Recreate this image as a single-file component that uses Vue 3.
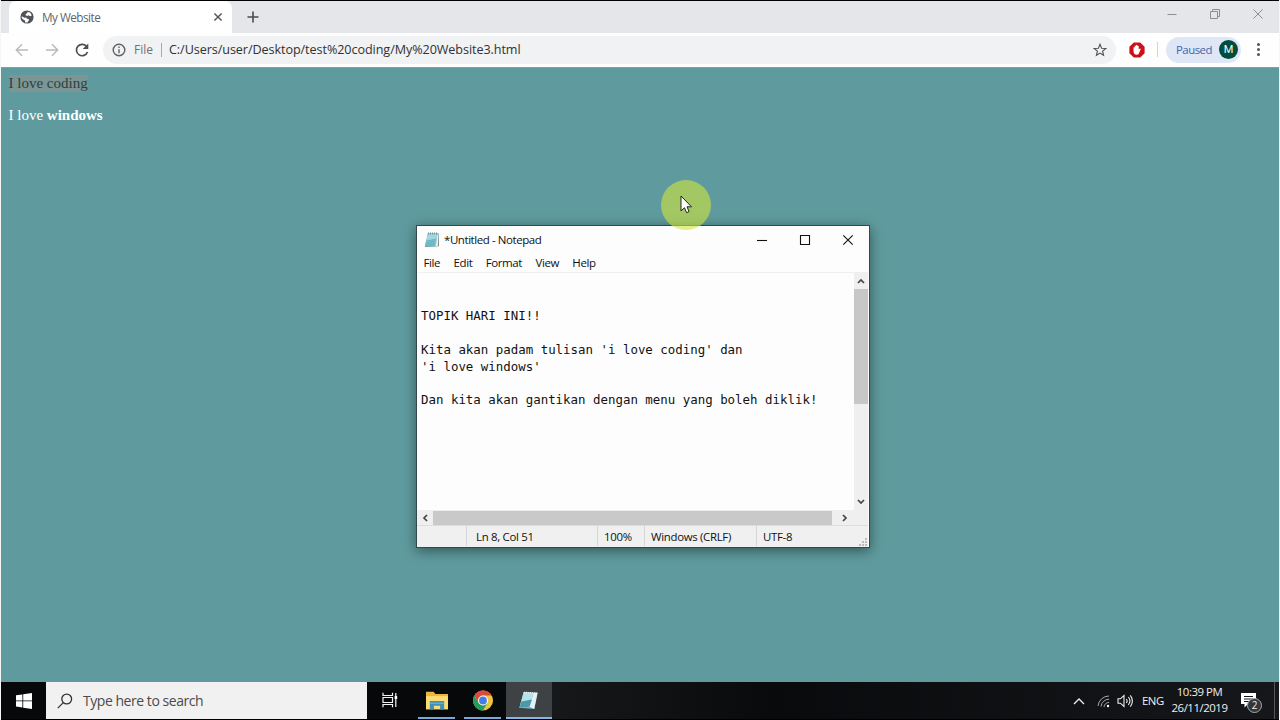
<template>
  <div class="screen">
    <header class="tabstrip">
      <div class="tab">
        <svg class="globe" viewBox="0 0 14 14"><circle cx="7" cy="7" r="6.6" fill="#505358" /><path d="M1.7 6.2l2.7 1.5 1.8-.2.8 1.2 1.7.2.2 1.5-1.6 2-2.2.2-.1-2-1.8-1.1-1.5-1.6zM7.6 1.7l2.8 1.1 1.4 2.8-1.7.7-1.7-1-1.2.6-1.6-.7.2-1.4 1.5-.5z" fill="#fff" /></svg>
        <span class="tab-title">My Website</span>
        <svg class="tab-close" viewBox="0 0 10 10"><path d="M1.4 1.4l7.2 7.2M8.6 1.4L1.4 8.6" /></svg>
      </div>
      <svg class="new-tab" viewBox="0 0 12 12"><path d="M6 .5v11M.5 6h11" /></svg>
      <div class="browser-controls">
        <svg viewBox="0 0 12 12"><path d="M1.5 6.5h9" /></svg>
        <svg viewBox="0 0 12 12"><path d="M1.5 3.5h7v7h-7zM3.5 3.5v-2h7v7h-2" /></svg>
        <svg viewBox="0 0 12 12"><path d="M1.5 1.5l9 9M10.5 1.5l-9 9" /></svg>
      </div>
    </header>

    <div class="toolbar">
      <svg class="nav muted" viewBox="0 0 16 16"><path d="M14 8H2.5M8 2.3L2.3 8 8 13.7" /></svg>
      <svg class="nav muted" viewBox="0 0 16 16"><path d="M2 8h11.5M8 2.3L13.7 8 8 13.7" /></svg>
      <svg class="nav" viewBox="0 0 16 16"><path d="M12.8 4.7A5.7 5.7 0 1 0 13.5 10" /><path d="M14.3 1.5v5.6H8.7z" fill="#4b4e52" stroke="none" /></svg>
      <div class="omnibox">
        <svg class="info" viewBox="0 0 14 14"><circle cx="7" cy="7" r="5.8" /><path d="M7 6.2v4M7 3.5v1.5" /></svg>
        <span class="scheme">File</span>
        <i class="divider"></i>
        <span class="url">C:/Users/user/Desktop/test%20coding/My%20Website3.html</span>
        <svg class="star" viewBox="0 0 14 14"><path d="M7 1.3l1.6 3.9 4.2.3-3.2 2.7 1 4.1L7 10.1l-3.6 2.2 1-4.1-3.2-2.7 4.2-.3z" /></svg>
      </div>
      <svg class="adblock" viewBox="0 0 16 16"><path d="M4.8.4h6.4l4.4 4.4v6.4l-4.4 4.4H4.8L.4 11.2V4.8z" fill="#ca1018" /><path d="M4.5 8.2V5.5q.8-.7 1.2 0V4q.7-.8 1.3 0v-.7q.8-.9 1.4 0V4q.8-.7 1.3 0v3.5l1.1-1q.9-.1.9.7l-1.8 4.2q-.6 1.3-2.2 1.3-2.6 0-3-2z" fill="#fff" /></svg>
      <i class="tool-divider"></i>
      <div class="profile"><span>Paused</span><b>M</b></div>
      <i class="more"></i>
    </div>

    <main class="page">
      <p><span class="selected">I love coding</span></p>
      <p>I love <b>windows</b></p>
    </main>

    <footer class="taskbar">
      <div class="start"><svg viewBox="0 0 16 16"><path d="M0 2.3L6.4 1.4v6.1H0zM7.2 1.3L16 0v7.5H7.2zM0 8.3h6.4v6.2L0 13.6zM7.2 8.3H16V16l-8.8-1.3z" fill="#fff" /></svg></div>
      <div class="search">
        <svg viewBox="0 0 16 16"><circle cx="9.7" cy="6" r="4.9" /><path d="M6.3 9.6L.8 15.1" /></svg>
        <span>Type here to search</span>
      </div>
      <div class="task taskview"><svg viewBox="0 0 16 16"><path d="M1 .8v2.7h9.5V.8M1 15.2v-2.7h9.5v2.7M1 5.5h9.5v5H1zM13.8 1v14" /><path d="M12.6 4h2.6v3h-2.6z" fill="#fff" stroke="none" /></svg></div>
      <div class="task open"><svg class="big" viewBox="0 0 20 18"><path d="M0 1h7l1.5 2H20v14H0z" fill="#eab63f" /><path d="M0 5h20v12H0z" fill="#fbdc72" /><path d="M3.5 17V9.5h13V17h-3.7v-3.2H7.2V17z" fill="#4190b8" /><path d="M3.5 11.5h13" stroke="#68b4d5" stroke-width="1" /></svg></div>
      <div class="task open">
        <svg class="big" viewBox="0 0 22 22"><circle cx="11" cy="11" r="10.5" fill="#efc342" /><path d="M1.9 5.8A10.5 10.5 0 0 1 20.1 5.8H11L6.5 13.6z" fill="#db4a3c" /><path d="M1.9 5.8A10.5 10.5 0 0 0 11 21.5l4.5-7.9-4.5 2.6-4.5-2.6z" fill="#249d59" /><circle cx="11" cy="11" r="5.2" fill="#fff" /><circle cx="11" cy="11" r="4.1" fill="#427de8" /></svg>
      </div>
      <div class="task open active">
        <svg class="big" viewBox="0 0 22 22"><path d="M5.4 2L20 3l-3.5 17L1 18.5z" fill="#70b7c6" /><path d="M5.4 2L16 3l-4.5 14.5L1 18.5z" fill="#b7e1e8" /><path d="M16 3l4 0-3.5 17-5-2.5z" fill="#e6f1f2" /><path d="M3 12l11-2-2.5 7.5L1 18.5z" fill="#4899aa" /><path d="M6 2.5l13 .8" stroke="#eef8f8" stroke-width="1.5" stroke-dasharray="1 1" /></svg>
      </div>
      <div class="tray">
        <svg class="chevron" viewBox="0 0 12 8"><path d="M1 7l5-5 5 5" /></svg>
        <svg class="wifi" viewBox="0 0 14 14"><g fill="none" stroke="#a5a6a9"><path d="M1 12A11 11 0 0 1 12 2M4 12.5A8 8 0 0 1 12.2 5.2M7 13a5 5 0 0 1 5.2-4.6" /></g><circle cx="11" cy="12" r="1.2" fill="#fff" stroke="none" /></svg>
        <svg class="volume" viewBox="0 0 16 14"><path d="M1 4.8h2.4L7 1.5v11L3.4 9.2H1zM9.3 5q1.7 2 0 4M11.3 3q3.3 4 0 8M13.3 1.3q4.2 5.7 0 11.4" /></svg>
        <span class="lang">ENG</span>
        <div class="clock"><span>10:39 PM</span><span>26/11/2019</span></div>
        <div class="notices"><svg viewBox="0 0 16 16"><path d="M0 0h15v11H7l-3.5 3.5V11H0z" fill="#fff" /><path d="M3 3.5h9M3 6h9M3 8.5h6" stroke="#111318" /></svg><b>2</b></div>
        <i class="show-desktop"></i>
      </div>
    </footer>

    <section class="notepad">
      <div class="titlebar">
        <svg class="note-icon" viewBox="0 0 16 16"><path d="M3.8 1.5h11v12.8L1 15z" fill="#64777c" /><path d="M3.8 1.5h9.7l-1.8 12.7H1z" fill="#a1d7df" /><path d="M2.2 8.5l9.9-2-1.1 7.7H1z" fill="#71b9c7" /><path d="M13.5 2l1 .3-.7 11.6-2.1.3z" fill="#edf4f4" /><path d="M4 1.5h10" stroke="#6f969d" stroke-width="2" stroke-dasharray="1 1" /></svg>
        <span class="window-title">*Untitled - Notepad</span>
        <div class="window-controls">
          <svg viewBox="0 0 12 12"><path d="M1 6.5h10" /></svg>
          <svg viewBox="0 0 12 12"><path d="M1.5 1.5h9v9h-9z" /></svg>
          <svg viewBox="0 0 12 12"><path d="M1.3 1.3l9.4 9.4M10.7 1.3l-9.4 9.4" /></svg>
        </div>
      </div>
      <nav class="menu"><span v-for="item in menus" :key="item">{{ item }}</span></nav>
      <div class="editor">
        <pre>{{ note }}</pre>
        <div class="vscroll"><svg viewBox="0 0 8 8"><path d="M1 6l3-3 3 3" /></svg><i></i><svg viewBox="0 0 8 8"><path d="M1 2l3 3 3-3" /></svg></div>
      </div>
      <div class="hscroll"><svg viewBox="0 0 8 8"><path d="M6 1L3 4l3 3" /></svg><i></i><svg viewBox="0 0 8 8"><path d="M2 1l3 3-3 3" /></svg></div>
      <div class="status"><span></span><span>Ln 8, Col 51</span><span>100%</span><span>Windows (CRLF)</span><span>UTF-8</span>
        <svg class="grip" viewBox="0 0 8 8"><path d="M6 0h2v2H6zM3 3h2v2H3zM6 3h2v2H6zM0 6h2v2H0zM3 6h2v2H3zM6 6h2v2H6z" fill="#bcbcbc" /></svg>
      </div>
    </section>
    <i class="halo"></i>
    <svg class="pointer" viewBox="0 0 13 19"><path d="M1 1v15l3.4-3.3 2.2 5 2.5-1.1-2.1-4.8h4.5z" fill="#fff" stroke="#20251f" /></svg>
  </div>
</template>

<script setup>
const menus = ['File', 'Edit', 'Format', 'View', 'Help']

const note = `

TOPIK HARI INI!!

Kita akan padam tulisan 'i love coding' dan
'i love windows'

Dan kita akan gantikan dengan menu yang boleh diklik!`
</script>

<style>
body { margin: 0; overflow: hidden; background: #000; }
</style>

<style scoped>
.screen {
  box-sizing: border-box; position: relative; width: 1280px; height: 720px;
  border: solid #f5f7f7; border-width: 0 1px; padding: 1px 0;
  display: flex; flex-direction: column; overflow: hidden;
  background: #000; color: #222; font: 12px 'Open Sans', sans-serif;
}
svg { display: block; flex: none; }
span { white-space: nowrap; }
.tabstrip { height: 32px; flex: none; display: flex; background: #e5e6ea; }
.tab { box-sizing: border-box; width: 223px; margin-left: 8px; padding: 0 9px 1px 11px; display: flex; align-items: center; background: #fff; border-radius: 7px 7px 0 0; }
.globe { width: 14px; height: 14px; }
.tab-title { margin-left: 8px; font-size: 11.8px; letter-spacing: -.55px; color: #626468; }
.tab-close { width: 10px; height: 10px; margin-left: auto; fill: none; stroke: #505257; stroke-width: 1.4; }
.new-tab { width: 12px; height: 12px; margin: 10px 0 0 15px; fill: none; stroke: #484b50; stroke-width: 1.6; }
.browser-controls { display: flex; margin: 7px 15px 0 auto; gap: 31px; }
.browser-controls svg { width: 12px; height: 12px; fill: none; stroke: #8d8e92; }
.toolbar { height: 34px; flex: none; display: flex; align-items: center; padding: 0 0 1px 13px; box-sizing: border-box; background: #fefefe; }
.nav { width: 16px; height: 16px; margin-right: 14px; fill: none; stroke: #4b4e52; stroke-width: 1.7; }
.nav.muted { stroke: #b8b9ba; stroke-width: 1.4; }
.omnibox { box-sizing: border-box; height: 28px; width: 1013px; margin-left: -1px; padding: 0 9px; border-radius: 14px; display: flex; align-items: center; background: #f1f2f3; }
.info { width: 14px; height: 14px; fill: none; stroke: #606266; stroke-width: 1.4; }
.scheme { margin-left: 8px; width: 27px; color: #707175; font-size: 12px; }
.divider { width: 1px; height: 14px; background: #aaa; }
.url { margin-left: 7px; font-size: 12.6px; letter-spacing: -.07px; color: #303134; }
.star { width: 14px; height: 14px; margin-left: auto; fill: none; stroke: #505257; stroke-width: 1.1; }
.adblock { width: 16px; height: 16px; margin-left: 13px; }
.tool-divider { height: 15px; width: 1px; margin: 0 8px 0 12px; background: #d4d4d7; }
.profile { box-sizing: border-box; width: 75px; height: 26px; padding: 0 3px 0 10px; border-radius: 14px; display: flex; align-items: center; background: #dfe7f7; color: #4265aa; font-size: 11.4px; letter-spacing: -.5px; }
.profile b { width: 19px; height: 19px; margin-left: auto; border-radius: 50%; background: #004d3d; color: #f5fffb; text-align: center; font: 11px/19px Roboto, sans-serif; letter-spacing: 0; }
.more { width: 3px; height: 3px; margin-left: 16px; border-radius: 50%; background: #555; box-shadow: 0 -5px #555, 0 5px #555; }
.page { height: 615px; box-sizing: border-box; flex: none; background: #5f9b9e; padding: 7px 7.5px; border-top: 1px solid #70a8aa; font: 15px/17px 'Liberation Serif', serif; color: #fff; }
.page p { margin: 0 0 15px; }
.selected { display: inline-block; height: 17px; background: #7c9595; color: #2c3f42; }
.taskbar { height: 37px; display: flex; background: #070809; }
.start { width: 45px; display: grid; place-items: center; }
.start svg { width: 16px; height: 16px; }
.search { box-sizing: border-box; width: 321px; padding-left: 11px; display: flex; align-items: center; background: #f1f1f1; color: #4b4b4b; font-size: 14px; letter-spacing: -.46px; }
.search svg { width: 16px; height: 16px; margin-right: 10px; fill: none; stroke: #333; stroke-width: 1.3; }
.task { box-sizing: border-box; width: 46px; height: 37px; display: grid; place-items: center; padding-bottom: 1px; }
.task svg { width: 16px; height: 16px; fill: none; stroke: #f5f5f5; stroke-width: 1.2; }
.task .big { width: 22px; height: 21px; margin-left: 2px; stroke: none; }
.open { background: linear-gradient(#78a9d9, #78a9d9) 5px bottom / 37px 2px no-repeat; }
.active { margin-left: 1px; background: linear-gradient(#87b7e0, #87b7e0) center bottom / 46px 2px no-repeat, #3f4244; }
.active .big { margin-left: 0; }
.tray { flex: 1; display: flex; align-items: center; justify-content: flex-end; color: #f0f0f0; background: linear-gradient(90deg, #171819, #090a0c 30%, #15171a); }
.tray > svg { fill: none; stroke: #eee; }
.chevron { width: 12px; height: 8px; margin-right: 12px; stroke-width: 1.3; }
.wifi { width: 14px; height: 14px; margin-right: 6px; }
.volume { width: 16px; height: 14px; margin-right: 9px; stroke-width: 1.1; }
.lang { width: 22px; font-size: 11.4px; letter-spacing: -.5px; }
.clock { display: flex; flex-direction: column; align-items: center; width: 57px; margin: -2px 0 0 7px; line-height: 16px; font-size: 11.4px; letter-spacing: -.45px; }
.notices { position: relative; width: 46px; padding-left: 13px; box-sizing: border-box; }
.notices svg { width: 16px; height: 16px; }
.notices b { position: absolute; left: 19px; top: 5px; width: 13px; height: 13px; border: 1px solid #aaa; border-radius: 50%; background: #33363b; text-align: center; font: 10px/13px 'Open Sans', sans-serif; }
.show-desktop { width: 4px; height: 37px; border-left: 1px solid #55585b; }

.notepad { box-sizing: border-box; position: absolute; left: 415px; top: 225px; width: 454px; height: 323px; padding: 1px 1px 0 0; border: 1px solid #31494b; display: flex; flex-direction: column; background: #fdfdfd; box-shadow: 0 3px 12px rgba(0, 0, 0, .45); color: #111; }
.titlebar { box-sizing: border-box; height: 27px; flex: none; display: flex; align-items: center; padding: 0 0 2px 7px; }
.note-icon { width: 16px; height: 16px; }
.window-title { margin-left: 4px; font-size: 11.5px; letter-spacing: -.43px; }
.window-controls { display: flex; gap: 31px; margin: 0 14px 0 auto; }
.window-controls svg { width: 12px; height: 12px; fill: none; stroke: #111; stroke-width: 1.1; }
.menu { box-sizing: border-box; height: 19px; flex: none; display: flex; padding-left: 6.5px; gap: 13.4px; line-height: 18px; font-size: 11.5px; letter-spacing: -.4px; border-bottom: 1px solid #f0f0f0; }
.editor { height: 237px; flex: none; display: flex; justify-content: space-between; }
pre { margin: 0; padding: 1px 0 0 4px; font: 12.43px/16.9px 'DejaVu Sans Mono', monospace; }
.vscroll { width: 14px; display: flex; flex-direction: column; align-items: center; background: #efefef; }
.vscroll svg, .hscroll svg { width: 8px; height: 8px; fill: none; stroke: #454545; stroke-width: 1.7; }
.vscroll svg { margin: 4px 0; }
.vscroll i { width: 14px; height: 115px; margin-bottom: auto; background: #c7c7c7; }
.hscroll { height: 15px; flex: none; display: flex; align-items: center; background: #efefef; }
.hscroll svg { margin: 0 4px; }
.hscroll i { width: 399px; height: 14px; margin-right: 5px; background: #c9c9c9; }
.status { flex: 1; position: relative; display: grid; grid-template-columns: 50px 131px 47px 112px 1fr; border-top: 1px solid #ddd; background: #f0f0f0; font-size: 11.4px; letter-spacing: -.3px; line-height: 22px; }
.status span { box-sizing: border-box; height: 20px; padding-left: 6px; border-right: 1px solid #d6d6d6; }
.status span:nth-child(2) { padding-left: 9px; }
.status span:nth-child(5) { border: 0; }
.grip { position: absolute; right: 1px; bottom: 1px; width: 8px; height: 8px; }
.halo { position: absolute; left: 660px; top: 180px; width: 50px; height: 50px; border-radius: 50%; background: rgba(208, 228, 60, .6); }
.pointer { position: absolute; left: 679px; top: 195px; width: 13px; height: 19px; }
</style>
